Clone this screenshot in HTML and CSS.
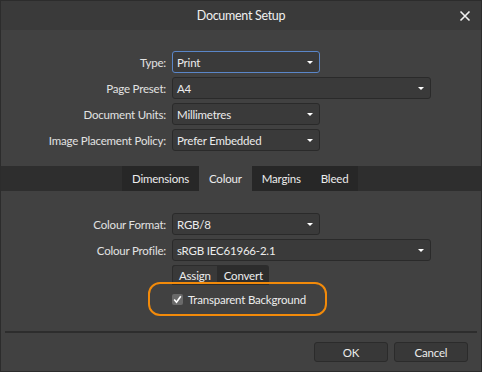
FILE: index.html
```html
<!DOCTYPE html>
<html lang="en">
<head>
    <meta charset="UTF-8">
    <title>Document Setup</title>
    <link rel="stylesheet" href="styles.css">
</head>
<body>
    <div class="window">
        <div class="titlebar">
            <span class="title">Document Setup</span>
            <svg class="close" width="12" height="12" viewBox="0 0 12 12">
                <path d="M1.5 1.5 L10.5 10.5 M10.5 1.5 L1.5 10.5" stroke="#f0f0f0" stroke-width="1.6" fill="none"/>
            </svg>
        </div>

        <div class="form top-form">
            <label>Type:</label>
            <div class="select short focused"><span>Print</span><i class="arrow"></i></div>
            <label>Page Preset:</label>
            <div class="select long"><span>A4</span><i class="arrow"></i></div>
            <label>Document Units:</label>
            <div class="select short"><span>Millimetres</span><i class="arrow"></i></div>
            <label>Image Placement Policy:</label>
            <div class="select short"><span>Prefer Embedded</span><i class="arrow"></i></div>
        </div>

        <div class="tabband">
            <div class="tabs">
                <div class="tab">Dimensions</div>
                <div class="tab active">Colour</div>
                <div class="tab">Margins</div>
                <div class="tab">Bleed</div>
            </div>
        </div>

        <div class="form colour-form">
            <label>Colour Format:</label>
            <div class="select short"><span>RGB/8</span><i class="arrow"></i></div>
            <label>Colour Profile:</label>
            <div class="select long"><span>sRGB IEC61966-2.1</span><i class="arrow"></i></div>
            <span></span>
            <div class="segment">
                <div class="seg active">Assign</div>
                <div class="seg">Convert</div>
            </div>
        </div>

        <div class="highlight">
            <span class="checkbox">
                <svg width="11" height="11" viewBox="0 0 11 11">
                    <path d="M2.2 5.6 L4.5 8.3 L8.8 2.2" stroke="#ffffff" stroke-width="1.6" fill="none"/>
                </svg>
            </span>
            <span class="check-label">Transparent Background</span>
        </div>

        <div class="footer">
            <button class="btn">OK</button>
            <button class="btn">Cancel</button>
        </div>
    </div>
</body>
</html>
```

FILE: styles.css
```css
* { box-sizing: border-box; }
body {
    margin: 0;
    padding: 0;
    background: #414141;
    font-family: Lato, "Open Sans", sans-serif;
    font-size: 11.5px;
    letter-spacing: -0.2px;
    color: #e6e6e6;
}
.window {
    width: 482px;
    height: 372px;
    border: 1px solid #2c2c2c;
    background: #414141;
    display: flex;
    flex-direction: column;
}
.titlebar {
    height: 29px;
    flex: none;
    background: #3a3a3a;
    display: flex;
    align-items: center;
    justify-content: center;
    position: relative;
}
.title {
    font-size: 12.5px;
    letter-spacing: -0.3px;
    color: #f0f0f0;
}
.close {
    position: absolute;
    right: 10px;
    top: 9px;
}
.form {
    display: grid;
    grid-template-columns: 165px auto;
    column-gap: 6px;
    row-gap: 4px;
    align-items: center;
    justify-items: start;
}
.form label {
    justify-self: end;
    color: #e2e2e2;
    white-space: nowrap;
}
.top-form { margin-top: 21px; }
.colour-form { margin-top: 22px; }
.select {
    height: 22px;
    background: #3a3a3a;
    border: 1px solid #2a2a2a;
    border-radius: 3px;
    display: flex;
    align-items: center;
    justify-content: space-between;
    padding: 0 6px 0 4px;
    color: #ececec;
}
.select.short { width: 148px; }
.select.long { width: 259px; }
.select.focused { border-color: #5a86c8; }
.arrow {
    width: 0;
    height: 0;
    border-left: 3px solid transparent;
    border-right: 3px solid transparent;
    border-top: 3px solid #ffffff;
}
.tabband {
    margin-top: 15px;
    height: 25px;
    background: #2e2e2e;
    display: flex;
    padding-left: 121px;
}
.tabs {
    display: flex;
    background: #272727;
}
.tab {
    padding: 0 10px;
    display: flex;
    align-items: center;
    color: #ececec;
}
.tab.active { background: #414141; }
.segment {
    display: flex;
    height: 20px;
    background: #2c2c2c;
    border-radius: 3px 3px 0 0;
}
.seg {
    padding: 0 6px;
    display: flex;
    align-items: center;
    color: #ececec;
}
.seg.active {
    background: #393939;
    border: 1px solid #2c2c2c;
    border-radius: 3px 0 0 0;
}
.highlight {
    margin-top: -3px;
    margin-left: 147px;
    width: 179px;
    height: 34px;
    border: 2.5px solid #f28a0a;
    border-radius: 12px;
    display: flex;
    align-items: center;
    padding-left: 22px;
    gap: 5px;
}
.checkbox {
    width: 11px;
    height: 11px;
    background: #6a6a6a;
    border-radius: 2px;
    display: flex;
}
.check-label {
    color: #ececec;
    white-space: nowrap;
}
.footer {
    margin: 15px 4px 0 4px;
    border-top: 2px solid #2d2d2d;
    padding: 9px 9px 0 0;
    display: flex;
    justify-content: flex-end;
    gap: 6px;
}
.btn {
    width: 74px;
    height: 20px;
    background: #383838;
    border: 1px solid #2b2b2b;
    border-radius: 3px;
    color: #ececec;
    font-family: inherit;
    font-size: 11.5px;
    letter-spacing: -0.2px;
    padding: 0;
}
```
